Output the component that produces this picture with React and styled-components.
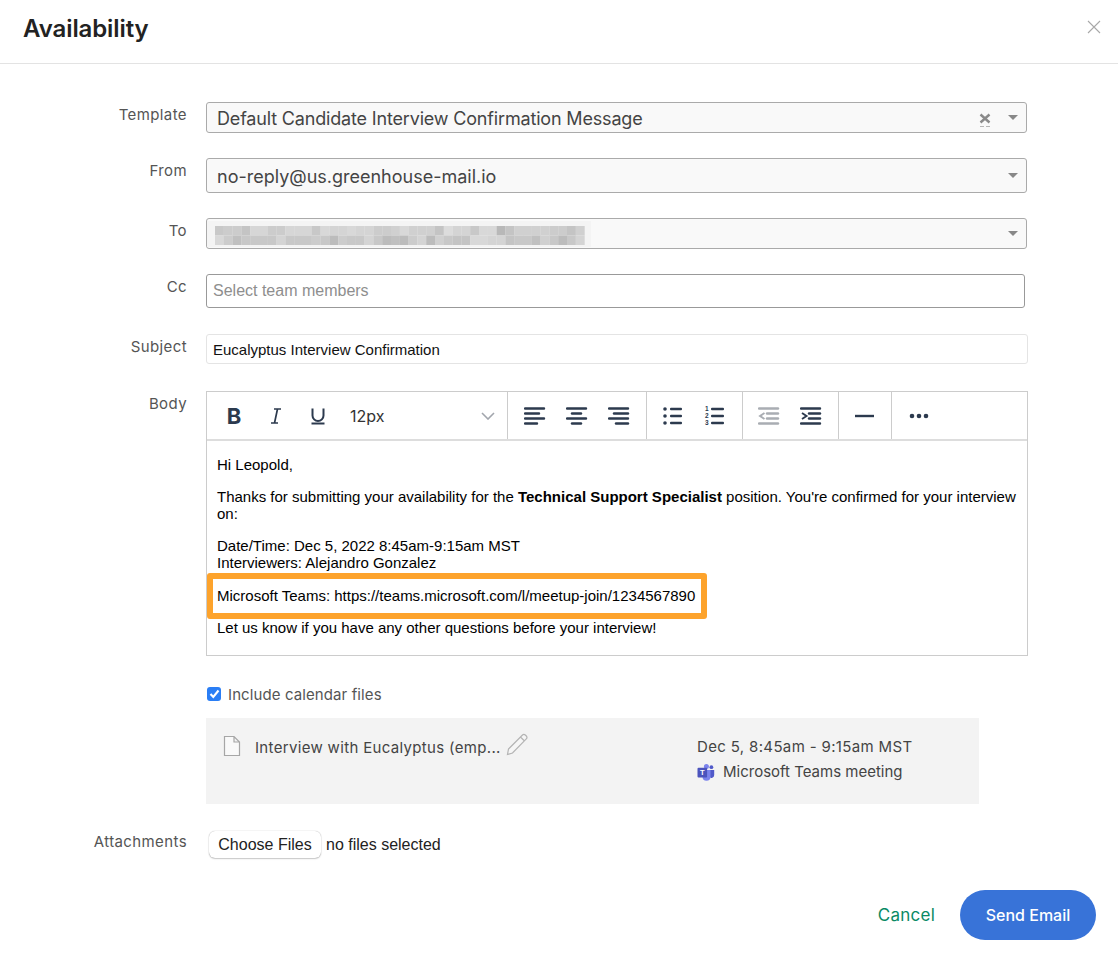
import styled, { createGlobalStyle } from "styled-components";

const GlobalStyle = createGlobalStyle`
  html, body {
    margin: 0;
    padding: 0;
    background: #fff;
  }
  *, *::after {
    box-sizing: border-box;
  }
`;

const SANS = `Inter, "Liberation Sans", sans-serif`;
const ARIAL = `"Liberation Sans", Arial, sans-serif`;

const BLUR_TOP = [
  "c8", "cc", "cc", "c4", "d6", "d6", "cc", "cc", "d6", "d6", "d6", "c8", "d8", "d4", "d4", "d8", "d4", "d4", "cc", "cc",
  "d0", "d8", "d0", "d0", "d0", "c4", "dc", "d4", "d4", "c8", "d8", "d8", "b8", "c4", "d0", "d0", "d0", "d0", "cc", "cc", "c4", "d0",
];
const BLUR_BOTTOM = [
  "d8", "cc", "c0", "c8", "c8", "c8", "c8", "d4", "c8", "c8", "c8", "cc", "c8", "bc", "cc", "c8", "c8", "d4", "c8", "bc",
  "c0", "bc", "cc", "d4", "bc", "d0", "c8", "c4", "c4", "d8", "d8", "d4", "d4", "c4", "c8", "c8", "c0", "d0", "c8", "bc",
  "c8", "d4",
];

const Blur = () => (
  <BlurArt width="384" height="31" viewBox="0 0 384 31">
    <rect x="0" y="3" width="384" height="26" fill="#f4f4f4" />
    {BLUR_TOP.map((c, i) => (
      <rect key={i} x={8 + i * 8.8} y="8" width="8.9" height="9.5" fill={`#${c}${c}${c}`} />
    ))}
    {BLUR_BOTTOM.map((c, i) => (
      <rect key={i} x={8 + i * 8.8} y="17.5" width="8.9" height="9.5" fill={`#${c}${c}${c}`} />
    ))}
  </BlurArt>
);

const Lines = ({ rows, color = "#2c3a4e" }) => (
  <svg width="22" height="18" viewBox="0 0 22 18">
    {rows.map(([x1, x2], i) => (
      <line key={i} x1={x1} x2={x2} y1={1.5 + i * 5} y2={1.5 + i * 5} stroke={color} strokeWidth="2.4" strokeLinecap="round" />
    ))}
  </svg>
);

const Bullets = () => (
  <svg width="22" height="18" viewBox="0 0 22 18" fill="#2c3a4e">
    {[2, 9, 16].map((y) => (
      <g key={y}>
        <circle cx="3" cy={y} r="1.8" />
        <rect x="8" y={y - 1.2} width="12" height="2.4" rx="1" />
      </g>
    ))}
  </svg>
);

const Numbers = () => (
  <svg width="22" height="24" viewBox="0 -3 22 24" fill="#2c3a4e">
    {[2, 9, 16].map((y, i) => (
      <g key={y}>
        <text x="1" y={y + 2.3} fontSize="6.5" fontWeight="700" fontFamily={ARIAL}>
          {i + 1}
        </text>
        <rect x="7" y={y - 1.2} width="13" height="2.4" rx="1" />
      </g>
    ))}
  </svg>
);

const Indent = ({ color, out }) => (
  <svg width="22" height="18" viewBox="0 0 22 18">
    {[[1, 20], [9, 20], [9, 20], [1, 20]].map(([x1, x2], i) => (
      <line key={i} x1={x1} x2={x2} y1={1.5 + i * 5} y2={1.5 + i * 5} stroke={color} strokeWidth="2.4" strokeLinecap="round" />
    ))}
    <path
      d={out ? "M6.5 6 L2 9 L6.5 12" : "M2 6 L6.5 9 L2 12"}
      fill="none"
      stroke={color}
      strokeWidth="1.9"
    />
  </svg>
);

const TeamsIcon = () => (
  <svg width="18" height="18" viewBox="0 0 18 18">
    <circle cx="14.4" cy="4.2" r="1.9" fill="#5059c9" />
    <path d="M11 7h6.2v5a2.8 2.8 0 0 1-5 1.8z" fill="#5059c9" />
    <circle cx="9.4" cy="3.4" r="2.5" fill="#7b83eb" />
    <path d="M5.5 7h8v6.8a4 4 0 0 1-8 0z" fill="#7b83eb" />
    <rect x="0.5" y="4.8" width="9.6" height="9.6" rx="1" fill="#4b53bc" />
    <text x="5.3" y="12.3" fontSize="7.5" fontWeight="700" fill="#fff" textAnchor="middle" fontFamily={ARIAL}>
      T
    </text>
  </svg>
);

const App = () => {
  return (
    <>
      <GlobalStyle />
      <Modal>
        <Header>
          <Title>Availability</Title>
          <CloseIcon width="14" height="14" viewBox="0 0 14 14">
            <path d="M1 1 L13 13 M13 1 L1 13" stroke="#a8a8a8" strokeWidth="1.1" fill="none" />
          </CloseIcon>
        </Header>
        <Form>
          <Row>
            <Label>Template</Label>
            <SelectBox $height={31}>
              <SelectText $tight>Default Candidate Interview Confirmation Message</SelectText>
              <ClearMark>
                <svg width="12" height="14" viewBox="0 0 12 14">
                  <path d="M1.5 1.5 L10.5 9.5 M10.5 1.5 L1.5 9.5" stroke="#8a8a8a" strokeWidth="2.4" />
                  <path d="M1 13.5h4M7 13.5h4" stroke="#b5b5b5" strokeWidth="1" />
                </svg>
              </ClearMark>
              <Caret />
            </SelectBox>
          </Row>
          <Row $top={25}>
            <Label>From</Label>
            <SelectBox $height={35}>
              <SelectText>no-reply@us.greenhouse-mail.io</SelectText>
              <Caret />
            </SelectBox>
          </Row>
          <Row $top={25}>
            <Label>To</Label>
            <SelectBox $height={31}>
              <Blur />
              <Caret />
            </SelectBox>
          </Row>
          <Row $top={25}>
            <Label>Cc</Label>
            <CcField>Select team members</CcField>
          </Row>
          <Row $top={26}>
            <Label>Subject</Label>
            <SubjectField>Eucalyptus Interview Confirmation</SubjectField>
          </Row>
          <Row $top={27}>
            <Label>Body</Label>
            <Editor>
              <Toolbar>
                <ToolGroup $width={301} $pad={6}>
                  <ToolButton>
                    <BoldGlyph>B</BoldGlyph>
                  </ToolButton>
                  <ToolButton>
                    <svg width="16" height="18" viewBox="0 0 16 18">
                      <path d="M6 2 H13 M3 16 H10 M9.5 2 L6.5 16" stroke="#2c3a4e" strokeWidth="1.7" fill="none" />
                    </svg>
                  </ToolButton>
                  <ToolButton>
                    <svg width="16" height="18" viewBox="0 0 16 18">
                      <path d="M2.5 1.5 V8.5 a5.5 5.5 0 0 0 11 0 V1.5" stroke="#2c3a4e" strokeWidth="2" fill="none" />
                      <path d="M1.5 16.5 H14.5" stroke="#2c3a4e" strokeWidth="2" />
                    </svg>
                  </ToolButton>
                  <SizeSelect>
                    12px
                    <svg width="14" height="8" viewBox="0 0 14 8">
                      <path d="M1 1 L7 7 L13 1" stroke="#a2a6ad" strokeWidth="1.6" fill="none" />
                    </svg>
                  </SizeSelect>
                </ToolGroup>
                <ToolGroup $width={139} $pad={6}>
                  <ToolButton>
                    <Lines rows={[[1, 20], [1, 15], [1, 20], [1, 13]]} />
                  </ToolButton>
                  <ToolButton>
                    <Lines rows={[[1, 20], [6, 15], [1, 20], [6, 15]]} />
                  </ToolButton>
                  <ToolButton>
                    <Lines rows={[[1, 20], [6, 20], [1, 20], [8, 20]]} />
                  </ToolButton>
                </ToolGroup>
                <ToolGroup $width={96} $pad={5}>
                  <ToolButton>
                    <Bullets />
                  </ToolButton>
                  <ToolButton>
                    <Numbers />
                  </ToolButton>
                </ToolGroup>
                <ToolGroup $width={96} $pad={5}>
                  <ToolButton>
                    <Indent color="#a9adb3" out />
                  </ToolButton>
                  <ToolButton>
                    <Indent color="#2c3a4e" />
                  </ToolButton>
                </ToolGroup>
                <ToolGroup $width={53} $pad={5}>
                  <ToolButton>
                    <svg width="22" height="18" viewBox="0 0 22 18">
                      <line x1="1" x2="20" y1="9" y2="9" stroke="#2c3a4e" strokeWidth="2.4" />
                    </svg>
                  </ToolButton>
                </ToolGroup>
                <ToolGroup $last $pad={6}>
                  <ToolButton>
                    <svg width="22" height="18" viewBox="0 0 22 18" fill="#2c3a4e">
                      <circle cx="4" cy="9" r="2.3" />
                      <circle cx="11" cy="9" r="2.3" />
                      <circle cx="18" cy="9" r="2.3" />
                    </svg>
                  </ToolButton>
                </ToolGroup>
              </Toolbar>
              <EditorBody>
                <p>Hi Leopold,</p>
                <p>
                  Thanks for submitting your availability for the <b>Technical Support Specialist</b> position.
                  You're confirmed for your interview on:
                </p>
                <p>
                  Date/Time: Dec 5, 2022 8:45am-9:15am MST
                  <br />
                  Interviewers: Alejandro Gonzalez
                </p>
                <Highlighted>Microsoft Teams: https://teams.microsoft.com/l/meetup-join/1234567890</Highlighted>
                <p>Let us know if you have any other questions before your interview!</p>
              </EditorBody>
            </Editor>
          </Row>
          <CheckRow>
            <CheckBox>
              <svg width="11" height="10" viewBox="0 0 11 10">
                <path d="M1.5 5 L4.3 8 L9.5 1.5" stroke="#fff" strokeWidth="2.1" fill="none" />
              </svg>
            </CheckBox>
            <CheckLabel>Include calendar files</CheckLabel>
          </CheckRow>
          <CalendarPanel>
            <CalendarFile>
              <svg width="18" height="22" viewBox="0 0 18 22">
                <path
                  d="M1.5 1.5 H11 L16.5 7 V20.5 H1.5 Z M11 1.5 V7 H16.5"
                  fill="#f9f9f9"
                  stroke="#a6a6a6"
                  strokeWidth="1.2"
                />
              </svg>
              <FileName>Interview with Eucalyptus (emp...</FileName>
              <svg width="23" height="24" viewBox="0 0 23 24">
                <path
                  d="M2.5 17 L16.5 3 a2 2 0 0 1 2.8 0 l1 1 a2 2 0 0 1 0 2.8 L6.5 21 L1.5 22.5 Z M14.5 5 L18.5 9"
                  fill="#f6f6f6"
                  stroke="#b4b4b4"
                  strokeWidth="1.2"
                />
              </svg>
            </CalendarFile>
            <CalendarMeta>
              <MetaLine $wide>Dec 5, 8:45am - 9:15am MST</MetaLine>
              <MeetingLine>
                <TeamsIcon />
                <MetaLine>Microsoft Teams meeting</MetaLine>
              </MeetingLine>
            </CalendarMeta>
          </CalendarPanel>
          <Row $top={27}>
            <Label $pad={1}>Attachments</Label>
            <FilePicker>
              <ChooseButton>Choose Files</ChooseButton>
              <NoFiles>no files selected</NoFiles>
            </FilePicker>
          </Row>
        </Form>
        <Footer>
          <CancelLink>Cancel</CancelLink>
          <SendButton>Send Email</SendButton>
        </Footer>
      </Modal>
    </>
  );
};

export default App;

const Modal = styled.div`
  width: 1118px;
  height: 960px;
  background: #fff;
  font-family: ${SANS};
  overflow: hidden;
`;

const Header = styled.header`
  height: 64px;
  padding: 0 17px 6px 23px;
  display: flex;
  align-items: center;
  justify-content: space-between;
  border-bottom: 1px solid #e3e3e3;
`;

const Title = styled.h1`
  margin: 0;
  font-size: 24px;
  font-weight: 600;
  letter-spacing: -0.1px;
  color: #222;
`;

const CloseIcon = styled.svg`
  display: block;
  margin-top: -4px;
`;

const Form = styled.div`
  padding-top: 38px;
`;

const Row = styled.div`
  display: flex;
  gap: 19px;
  margin-top: ${(p) => p.$top || 0}px;
`;

const Label = styled.label`
  width: 187px;
  flex: none;
  padding-top: ${(p) => p.$pad ?? 3}px;
  text-align: right;
  font-size: 15px;
  line-height: 20px;
  letter-spacing: 0.4px;
  color: #555;
`;

const SelectBox = styled.div`
  width: 821px;
  height: ${(p) => p.$height}px;
  display: flex;
  align-items: center;
  padding: 0 8px 0 10px;
  position: relative;
  background: #f9f9f9;
  border: 1px solid #aaa;
  border-radius: 3px;
`;

const SelectText = styled.span`
  flex: 1;
  padding-top: 2px;
  font-size: 18px;
  letter-spacing: ${(p) => (p.$tight ? "-0.17px" : "0")};
  color: #444;
`;

const BlurArt = styled.svg`
  position: absolute;
  left: 0;
  top: -1px;
`;

const ClearMark = styled.span`
  display: flex;
  margin: 4px 17px 0 0;
`;

const Caret = styled.span`
  margin-left: auto;
  width: 0;
  height: 0;
  border-left: 5px solid transparent;
  border-right: 5px solid transparent;
  border-top: 5px solid #888;
`;

const CcField = styled.div`
  width: 819px;
  height: 34px;
  display: flex;
  align-items: center;
  padding: 0 6px;
  border: 1px solid #999;
  border-radius: 3px;
  font-family: ${ARIAL};
  font-size: 16px;
  color: #8e8e8e;
`;

const SubjectField = styled.div`
  width: 822px;
  height: 30px;
  display: flex;
  align-items: center;
  padding: 0 6px;
  border: 1px solid #e4e4e4;
  border-radius: 3px;
  font-family: ${ARIAL};
  font-size: 15px;
  color: #111;
`;

const Editor = styled.div`
  width: 822px;
  height: 265px;
  border: 1px solid #ccc;
`;

const Toolbar = styled.div`
  height: 49px;
  display: flex;
  border-bottom: 2px solid #ddd;
`;

const ToolGroup = styled.div`
  display: flex;
  align-items: center;
  width: ${(p) => (p.$width ? `${p.$width}px` : "auto")};
  padding-left: ${(p) => p.$pad}px;
  border-right: ${(p) => (p.$last ? "none" : "1px solid #ccc")};
`;

const ToolButton = styled.div`
  width: 42px;
  height: 100%;
  flex: none;
  display: flex;
  align-items: center;
  justify-content: center;
`;

const BoldGlyph = styled.span`
  font-size: 22px;
  font-weight: 700;
  color: #2c3a4e;
`;

const SizeSelect = styled.div`
  flex: 1;
  display: flex;
  align-items: center;
  justify-content: space-between;
  padding: 0 12px 0 11px;
  font-size: 16px;
  color: #333;
`;

const EditorBody = styled.div`
  padding: 15px 10px 0;
  font-family: ${ARIAL};
  font-size: 15px;
  line-height: 17px;
  color: #000;
  p {
    margin: 0 0 15px;
  }
`;

const Highlighted = styled.p`
  position: relative;
  top: 1px;
  && {
    margin-bottom: 16px;
  }
  &::after {
    content: "";
    position: absolute;
    left: -10px;
    top: -14px;
    width: 500px;
    height: 46px;
    border: 6px solid #fda32c;
    border-radius: 3px;
  }
`;

const CheckRow = styled.div`
  margin: 29px 0 0 207px;
  height: 18px;
  display: flex;
  align-items: center;
  gap: 7px;
`;

const CheckBox = styled.span`
  width: 14px;
  height: 14px;
  display: flex;
  align-items: center;
  justify-content: center;
  background: #2a7ef5;
  border-radius: 3px;
`;

const CheckLabel = styled.span`
  font-size: 15px;
  letter-spacing: 0.1px;
  color: #555;
`;

const CalendarPanel = styled.div`
  width: 773px;
  height: 86px;
  margin: 15px 0 0 206px;
  padding: 15px 0 0 17px;
  display: flex;
  background: #f3f3f3;
`;

const CalendarFile = styled.div`
  width: 474px;
  height: 26px;
  display: flex;
  align-items: center;
  gap: 14px;
  svg:last-child {
    margin: -4px 0 0 -9px;
  }
`;

const FileName = styled.span`
  padding-top: 2px;
  font-size: 15px;
  letter-spacing: 0.33px;
  color: #444;
`;

const CalendarMeta = styled.div`
  display: flex;
  flex-direction: column;
  gap: 5px;
  padding-top: 4px;
`;

const MetaLine = styled.span`
  font-size: 15px;
  line-height: 20px;
  letter-spacing: ${(p) => (p.$wide ? "0.35px" : "0")};
  color: #444;
`;

const MeetingLine = styled.div`
  display: flex;
  align-items: center;
  gap: 8px;
`;

const FilePicker = styled.div`
  display: flex;
  align-items: center;
  padding-left: 3px;
`;

const ChooseButton = styled.button`
  width: 112px;
  height: 27px;
  padding: 0;
  background: #fff;
  border: none;
  border-radius: 6px;
  box-shadow: 0 0 1px rgba(0, 0, 0, 0.35), 0 1px 1.5px rgba(0, 0, 0, 0.2);
  font-family: ${ARIAL};
  font-size: 16px;
  color: #222;
`;

const NoFiles = styled.span`
  margin-left: 5px;
  font-family: ${ARIAL};
  font-size: 16px;
  color: #222;
`;

const Footer = styled.footer`
  margin-top: 32px;
  padding-right: 22px;
  display: flex;
  justify-content: flex-end;
  align-items: center;
  gap: 25px;
`;

const CancelLink = styled.a`
  font-size: 17px;
  letter-spacing: 0.25px;
  color: #0a8a64;
`;

const SendButton = styled.button`
  width: 136px;
  height: 50px;
  border: none;
  border-radius: 25px;
  background: #3873d8;
  font-family: ${SANS};
  font-size: 16px;
  font-weight: 500;
  color: #fff;
`;
